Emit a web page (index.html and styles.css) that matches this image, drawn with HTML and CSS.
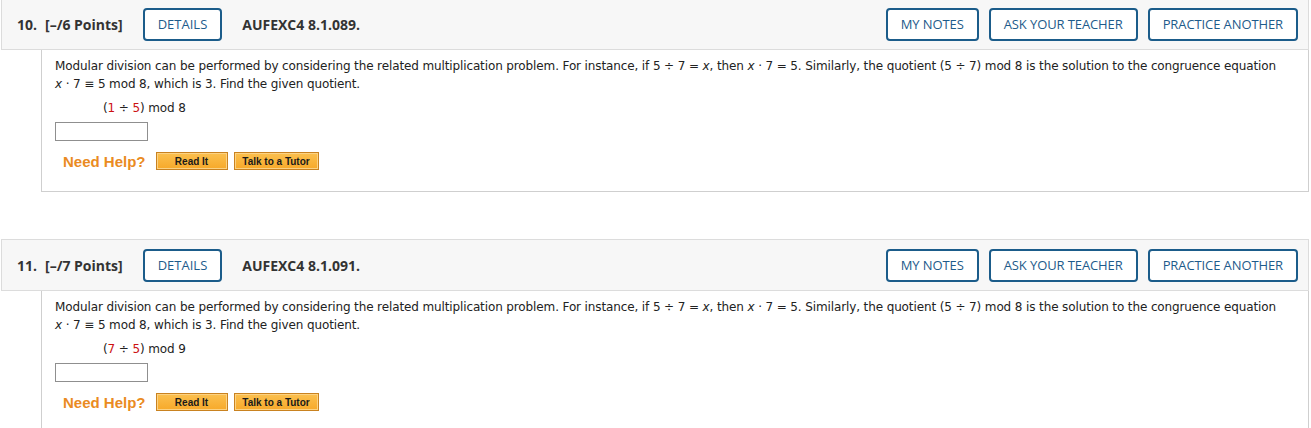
FILE: index.html
```html
<!DOCTYPE html>
<html lang="en">
<head>
<meta charset="utf-8">
<title>Questions</title>
<link rel="stylesheet" href="styles.css">
</head>
<body>
<div class="questions">
  <section class="question">
    <div class="qhead">
      <span class="qnum">10.</span>
      <span class="qpts">[–/6 Points]</span>
      <button class="hbtn">DETAILS</button>
      <span class="qid">AUFEXC4 8.1.089.</span>
      <div class="qactions">
        <button class="hbtn">MY NOTES</button>
        <button class="hbtn">ASK YOUR TEACHER</button>
        <button class="hbtn">PRACTICE ANOTHER</button>
      </div>
    </div>
    <div class="qbody">
      <p class="prompt">Modular division can be performed by considering the related multiplication problem. For instance, if 5 ÷ 7 = <i>x</i>, then <i>x</i> · 7 = 5. Similarly, the quotient (5 ÷ 7) mod 8 is the solution to the congruence equation <i>x</i> · 7 ≡ 5 mod 8, which is 3. Find the given quotient.</p>
      <div class="expr">(<span class="red">1</span> ÷ <span class="red">5</span>) mod 8</div>
      <input class="answer" type="text">
      <div class="help">
        <span class="need">Need Help?</span>
        <span class="obtn read">Read It</span>
        <span class="obtn tutor">Talk to a Tutor</span>
      </div>
    </div>
  </section>
  <section class="question">
    <div class="qhead">
      <span class="qnum">11.</span>
      <span class="qpts">[–/7 Points]</span>
      <button class="hbtn">DETAILS</button>
      <span class="qid">AUFEXC4 8.1.091.</span>
      <div class="qactions">
        <button class="hbtn">MY NOTES</button>
        <button class="hbtn">ASK YOUR TEACHER</button>
        <button class="hbtn">PRACTICE ANOTHER</button>
      </div>
    </div>
    <div class="qbody">
      <p class="prompt">Modular division can be performed by considering the related multiplication problem. For instance, if 5 ÷ 7 = <i>x</i>, then <i>x</i> · 7 = 5. Similarly, the quotient (5 ÷ 7) mod 8 is the solution to the congruence equation <i>x</i> · 7 ≡ 5 mod 8, which is 3. Find the given quotient.</p>
      <div class="expr">(<span class="red">7</span> ÷ <span class="red">5</span>) mod 9</div>
      <input class="answer" type="text">
      <div class="help">
        <span class="need">Need Help?</span>
        <span class="obtn read">Read It</span>
        <span class="obtn tutor">Talk to a Tutor</span>
      </div>
    </div>
  </section>
</div>
</body>
</html>
```
FILE: styles.css
```css
html, body {
  margin: 0;
  padding: 0;
  background: #fff;
}
.questions {
  margin-top: -2px;
  padding: 0 2px 0 1px;
}
.question + .question {
  margin-top: 47px;
}
.qhead {
  display: flex;
  align-items: center;
  height: 50px;
  padding: 0 10px 0 15px;
  background: #f7f7f7;
  border: 1px solid #dcdcdc;
  font-family: "Open Sans", sans-serif;
  font-size: 14px;
  font-weight: 700;
  color: #333;
}
.qnum {
  width: 28px;
}
.qpts {
  margin-right: 20px;
}
.qid {
  margin-left: 20px;
}
.hbtn {
  height: 33px;
  padding: 0 13px;
  border: 2px solid #1b5c8a;
  border-radius: 4px;
  background: #fff;
  color: #1e5b8b;
  font-family: "Open Sans", sans-serif;
  font-size: 13px;
  font-weight: 400;
  cursor: pointer;
}
.qactions {
  margin-left: auto;
  display: flex;
  gap: 10px;
}
.qactions .hbtn {
  padding: 0 13px;
  letter-spacing: -0.1px;
}
.qbody {
  margin-left: 40px;
  border: 1px solid #cfcfcf;
  border-top: 0;
  padding: 7px 25px 21px 13px;
  font-family: "DejaVu Sans", Verdana, sans-serif;
  font-size: 12px;
  letter-spacing: -0.12px;
  color: #222;
}
.prompt {
  margin: 0;
  line-height: 18px;
}
.expr {
  margin: 6px 0 0 48px;
  line-height: 18px;
}
.red {
  color: #cc1111;
}
.answer {
  display: block;
  box-sizing: border-box;
  width: 93px;
  height: 19px;
  margin: 5px 0 0;
  padding: 0;
  border: 1px solid #8f8f8f;
  background: #fff;
}
.help {
  display: flex;
  align-items: center;
  height: 18px;
  margin-top: 11px;
  padding-left: 8px;
  letter-spacing: 0;
}
.need {
  font-family: "Liberation Sans", Arial, sans-serif;
  font-size: 15px;
  font-weight: 700;
  color: #ea8b22;
  margin-right: 10px;
}
.obtn {
  box-sizing: border-box;
  height: 18px;
  display: flex;
  align-items: center;
  justify-content: center;
  border: 1px solid #c98220;
  box-shadow: inset 0 0 0 1px #fcd283;
  background: linear-gradient(#fbc04f, #f7a92a);
  font-family: "Liberation Sans", Arial, sans-serif;
  font-size: 10px;
  font-weight: 700;
  color: #1a1a1a;
}
.read {
  width: 72px;
  margin-right: 6px;
}
.tutor {
  width: 85px;
}
```
